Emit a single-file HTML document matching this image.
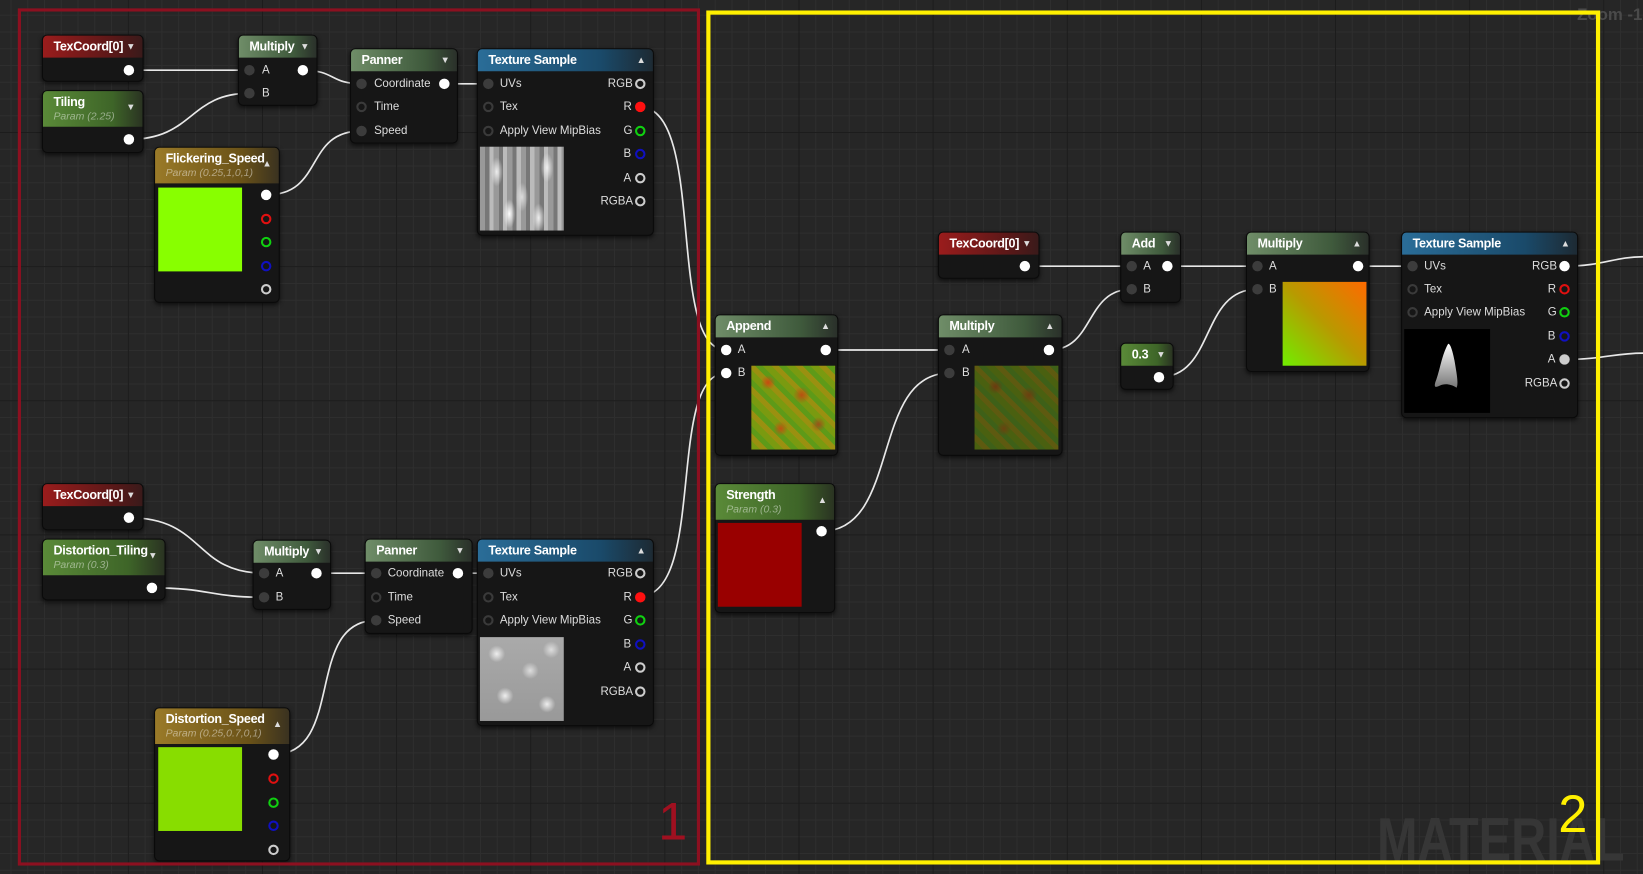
<!DOCTYPE html>
<html><head><meta charset="utf-8"><style>
*{margin:0;padding:0;box-sizing:border-box}
body{width:1643px;height:874px;overflow:hidden;position:relative;font-family:"Liberation Sans",sans-serif;background:#262626}
#w{position:absolute;left:0;top:0;width:1568px;height:834px;transform:scale(1.0479);transform-origin:0 0;overflow:hidden;
background-color:#262626;
background-image:linear-gradient(#1b1b1b 1px,transparent 1px),linear-gradient(90deg,#1b1b1b 1px,transparent 1px),linear-gradient(#2e2e2e 1px,transparent 1px),linear-gradient(90deg,#2e2e2e 1px,transparent 1px);
background-size:128px 128px,128px 128px,16px 16px,16px 16px;background-position:-6px -2px}
.n{position:absolute;background:#161616;border-radius:5px;border:1px solid #0a0a0a;box-shadow:0 2px 4px rgba(0,0,0,.6)}
.h{height:21px;border-radius:4px 4px 0 0;color:#fff;font-weight:bold;font-size:12px;padding:3px 0 0 10px;position:relative;letter-spacing:-.3px}
.h2{height:34px}
.h .s{display:block;font-weight:normal;font-style:italic;font-size:10px;color:rgba(255,255,255,.45);margin-top:2px;letter-spacing:0}
.h .a{position:absolute;right:7px;top:5px;font-size:9px;color:#ddd}
.red{background:linear-gradient(90deg,#9a1c1c,#5a1818 70%,#3a1a1a)}
.grn{background:linear-gradient(90deg,#6f8d68,#3f5a3c 70%,#2a302a)}
.par{background:linear-gradient(90deg,#5a8a38,#3e6528 70%,#2a3322)}
.gold{background:linear-gradient(90deg,#9a7a28,#6a5218 70%,#3a3220)}
.blu{background:linear-gradient(90deg,#2a6d98,#1a4a6a 70%,#1d2a33)}
.t{position:absolute;color:#ddd;font-size:11px;white-space:nowrap;transform:translateY(-50%)}
i{position:absolute;width:10px;height:10px;border-radius:50%;transform:translate(-50%,-50%)}
.pi{background:#3c3c3c}
.pe{border:2px solid #3a3a3a}
.po{background:#fff}
.pR{border:2px solid #e01010}.pG{border:2px solid #10d010}.pB{border:2px solid #1010c0}.pW{border:2px solid #ccc}
.pRf{background:#ff1010}.pGr{background:#ccc}
.sw{position:absolute}
.noise{background:
radial-gradient(ellipse 6px 14px at 20% 30%,#eee,transparent),radial-gradient(ellipse 6px 14px at 50% 60%,#ddd,transparent),radial-gradient(ellipse 6px 14px at 80% 25%,#eee,transparent),radial-gradient(ellipse 6px 14px at 35% 80%,#fff,transparent),radial-gradient(ellipse 6px 14px at 70% 85%,#eee,transparent),
repeating-linear-gradient(90deg,#999 0 5px,#777 5px 9px,#bbb 9px 13px);}
.noise2{background:radial-gradient(circle 8px at 20% 20%,#eee,transparent),radial-gradient(circle 8px at 60% 40%,#ddd,transparent),radial-gradient(circle 8px at 30% 70%,#eee,transparent),radial-gradient(circle 8px at 80% 80%,#eee,transparent),radial-gradient(circle 8px at 85% 15%,#ddd,transparent),
linear-gradient(#aaa,#999)}
.mix{background:radial-gradient(circle 7px at 20% 20%,#c84a10,transparent),radial-gradient(circle 8px at 60% 35%,#b85010,transparent),radial-gradient(circle 7px at 35% 75%,#c05010,transparent),radial-gradient(circle 7px at 80% 70%,#a05018,transparent),
repeating-linear-gradient(45deg,#7a9a10 0 6px,#9a9010 6px 11px,#5e9a18 11px 16px)}
.mix2{background:radial-gradient(circle 7px at 25% 25%,#6a3a10,transparent),radial-gradient(circle 8px at 65% 35%,#6a4010,transparent),radial-gradient(circle 7px at 35% 75%,#6a4210,transparent),
repeating-linear-gradient(45deg,#4a6010 0 6px,#5e5a10 6px 11px,#3e6018 11px 16px)}
</style></head><body><div id="w">

<svg width="1568" height="834" style="position:absolute;left:0;top:0" fill="none" stroke="#e8e8e8" stroke-width="1.6">
<path d="M123 67H238"/>
<path d="M123 133C185 133 180 89 238 89"/>
<path d="M289 67C320 67 315 80 345 80"/>
<path d="M254 186C310 186 290 125 345 125"/>
<path d="M424 80H466"/>
<path d="M610 102C675 102 635 334 693 334"/>
<path d="M123 494C195 494 185 547 252 547"/>
<path d="M145 561C200 561 200 570 252 570"/>
<path d="M302 547H359"/>
<path d="M261 720C330 720 290 592 359 592"/>
<path d="M437 547H466"/>
<path d="M610 569C675 569 635 356 693 356"/>
<path d="M788 334H906"/>
<path d="M784 507C860 507 830 356 906 356"/>
<path d="M1001 334C1045 334 1035 276 1080 276"/>
<path d="M978 254H1080"/>
<path d="M1114 254H1200"/>
<path d="M1106 360C1160 360 1145 276 1200 276"/>
<path d="M1296 254H1348"/>
<path d="M1493 254C1530 254 1540 245 1568 245"/>
<path d="M1493 343C1530 343 1540 337 1568 337"/>
</svg>

<div class="n" style="left:40px;top:33px;width:97px;height:45px"><div class="h red">TexCoord[0]<span class="a">▼</span></div></div>
<i class="po" style="left:123px;top:67px"></i>
<div class="n" style="left:40px;top:86px;width:97px;height:60px"><div class="h h2 par">Tiling<span class="s">Param (2.25)</span><span class="a" style="top:10px">▼</span></div></div>
<i class="po" style="left:123px;top:133px"></i>
<div class="n" style="left:227px;top:33px;width:76px;height:68px"><div class="h grn">Multiply<span class="a">▼</span></div></div>
<i class="pi" style="left:238px;top:67px"></i><span class="t" style="left:250px;top:67px">A</span>
<i class="pi" style="left:238px;top:89px"></i><span class="t" style="left:250px;top:89px">B</span>
<i class="po" style="left:289px;top:67px"></i>
<div class="n" style="left:334px;top:46px;width:103px;height:91px"><div class="h grn">Panner<span class="a">▼</span></div></div>
<i class="pi" style="left:345px;top:80px"></i><span class="t" style="left:357px;top:80px">Coordinate</span>
<i class="pe" style="left:345px;top:102px"></i><span class="t" style="left:357px;top:102px">Time</span>
<i class="pi" style="left:345px;top:125px"></i><span class="t" style="left:357px;top:125px">Speed</span>
<i class="po" style="left:424px;top:80px"></i>
<div class="n" style="left:455px;top:46px;width:169px;height:179px"><div class="h blu">Texture Sample<span class="a">▲</span></div><div class="sw noise" style="left:2px;top:93px;width:80px;height:80px"></div></div>
<i class="pi" style="left:466px;top:80px"></i><span class="t" style="left:477px;top:80px">UVs</span>
<i class="pe" style="left:466px;top:102px"></i><span class="t" style="left:477px;top:102px">Tex</span>
<i class="pe" style="left:466px;top:125px"></i><span class="t" style="left:477px;top:125px">Apply View MipBias</span>
<span class="t" style="left:580px;top:80px">RGB</span><i class="pW" style="left:611px;top:80px"></i>
<span class="t" style="left:595px;top:102px">R</span><i class="pRf" style="left:611px;top:102px"></i>
<span class="t" style="left:595px;top:125px">G</span><i class="pG" style="left:611px;top:125px"></i>
<span class="t" style="left:595px;top:147px">B</span><i class="pB" style="left:611px;top:147px"></i>
<span class="t" style="left:595px;top:170px">A</span><i class="pW" style="left:611px;top:170px"></i>
<span class="t" style="left:573px;top:192px">RGBA</span><i class="pW" style="left:611px;top:192px"></i>
<div class="n" style="left:147px;top:140px;width:120px;height:149px"><div class="h h2 gold">Flickering_Speed<span class="s">Param (0.25,1,0,1)</span><span class="a" style="top:10px">▲</span></div><div class="sw" style="left:3px;top:38px;width:80px;height:80px;background:#88ff00"></div></div>
<i class="po" style="left:254px;top:186px"></i><i class="pR" style="left:254px;top:209px"></i><i class="pG" style="left:254px;top:231px"></i><i class="pB" style="left:254px;top:254px"></i><i class="pW" style="left:254px;top:276px"></i>

<div class="n" style="left:40px;top:461px;width:97px;height:45px"><div class="h red">TexCoord[0]<span class="a">▼</span></div></div>
<i class="po" style="left:123px;top:494px"></i>
<div class="n" style="left:40px;top:514px;width:118px;height:59px"><div class="h h2 par">Distortion_Tiling<span class="s">Param (0.3)</span><span class="a" style="top:10px">▼</span></div></div>
<i class="po" style="left:145px;top:561px"></i>
<div class="n" style="left:241px;top:515px;width:75px;height:67px"><div class="h grn">Multiply<span class="a">▼</span></div></div>
<i class="pi" style="left:252px;top:547px"></i><span class="t" style="left:263px;top:547px">A</span>
<i class="pi" style="left:252px;top:570px"></i><span class="t" style="left:263px;top:570px">B</span>
<i class="po" style="left:302px;top:547px"></i>
<div class="n" style="left:348px;top:514px;width:103px;height:91px"><div class="h grn">Panner<span class="a">▼</span></div></div>
<i class="pi" style="left:359px;top:547px"></i><span class="t" style="left:370px;top:547px">Coordinate</span>
<i class="pe" style="left:359px;top:570px"></i><span class="t" style="left:370px;top:570px">Time</span>
<i class="pi" style="left:359px;top:592px"></i><span class="t" style="left:370px;top:592px">Speed</span>
<i class="po" style="left:437px;top:547px"></i>
<div class="n" style="left:455px;top:514px;width:169px;height:179px"><div class="h blu">Texture Sample<span class="a">▲</span></div><div class="sw noise2" style="left:2px;top:93px;width:80px;height:80px"></div></div>
<i class="pi" style="left:466px;top:547px"></i><span class="t" style="left:477px;top:547px">UVs</span>
<i class="pe" style="left:466px;top:570px"></i><span class="t" style="left:477px;top:570px">Tex</span>
<i class="pe" style="left:466px;top:592px"></i><span class="t" style="left:477px;top:592px">Apply View MipBias</span>
<span class="t" style="left:580px;top:547px">RGB</span><i class="pW" style="left:611px;top:547px"></i>
<span class="t" style="left:595px;top:570px">R</span><i class="pRf" style="left:611px;top:570px"></i>
<span class="t" style="left:595px;top:592px">G</span><i class="pG" style="left:611px;top:592px"></i>
<span class="t" style="left:595px;top:615px">B</span><i class="pB" style="left:611px;top:615px"></i>
<span class="t" style="left:595px;top:637px">A</span><i class="pW" style="left:611px;top:637px"></i>
<span class="t" style="left:573px;top:660px">RGBA</span><i class="pW" style="left:611px;top:660px"></i>
<div class="n" style="left:147px;top:675px;width:130px;height:147px"><div class="h h2 gold">Distortion_Speed<span class="s">Param (0.25,0.7,0,1)</span><span class="a" style="top:10px">▲</span></div><div class="sw" style="left:3px;top:37px;width:80px;height:80px;background:#88dd00"></div></div>
<i class="po" style="left:261px;top:720px"></i><i class="pR" style="left:261px;top:743px"></i><i class="pG" style="left:261px;top:766px"></i><i class="pB" style="left:261px;top:788px"></i><i class="pW" style="left:261px;top:811px"></i>

<div class="n" style="left:682px;top:300px;width:118px;height:135px"><div class="h grn">Append<span class="a">▲</span></div><div class="sw mix" style="left:34px;top:48px;width:80px;height:80px"></div></div>
<i class="po" style="left:693px;top:334px"></i><span class="t" style="left:704px;top:334px">A</span>
<i class="po" style="left:693px;top:356px"></i><span class="t" style="left:704px;top:356px">B</span>
<i class="po" style="left:788px;top:334px"></i>
<div class="n" style="left:895px;top:300px;width:119px;height:135px"><div class="h grn">Multiply<span class="a">▲</span></div><div class="sw mix2" style="left:34px;top:48px;width:80px;height:80px"></div></div>
<i class="pi" style="left:906px;top:334px"></i><span class="t" style="left:918px;top:334px">A</span>
<i class="pi" style="left:906px;top:356px"></i><span class="t" style="left:918px;top:356px">B</span>
<i class="po" style="left:1001px;top:334px"></i>
<div class="n" style="left:682px;top:461px;width:115px;height:124px"><div class="h h2 par">Strength<span class="s">Param (0.3)</span><span class="a" style="top:10px">▲</span></div><div class="sw" style="left:2px;top:37px;width:80px;height:80px;background:#990000"></div></div>
<i class="po" style="left:784px;top:507px"></i>
<div class="n" style="left:895px;top:221px;width:97px;height:45px"><div class="h red">TexCoord[0]<span class="a">▼</span></div></div>
<i class="po" style="left:978px;top:254px"></i>
<div class="n" style="left:1069px;top:221px;width:58px;height:68px"><div class="h grn">Add<span class="a">▼</span></div></div>
<i class="pi" style="left:1080px;top:254px"></i><span class="t" style="left:1091px;top:254px">A</span>
<i class="pi" style="left:1080px;top:276px"></i><span class="t" style="left:1091px;top:276px">B</span>
<i class="po" style="left:1114px;top:254px"></i>
<div class="n" style="left:1069px;top:327px;width:51px;height:45px"><div class="h par">0.3<span class="a">▼</span></div></div>
<i class="po" style="left:1106px;top:360px"></i>
<div class="n" style="left:1189px;top:221px;width:118px;height:134px"><div class="h grn">Multiply<span class="a">▲</span></div><div class="sw" style="left:34px;top:47px;width:80px;height:80px;background:linear-gradient(225deg,#ff6a00,#b89a00 50%,#70ee00)"></div></div>
<i class="pi" style="left:1200px;top:254px"></i><span class="t" style="left:1211px;top:254px">A</span>
<i class="pi" style="left:1200px;top:276px"></i><span class="t" style="left:1211px;top:276px">B</span>
<i class="po" style="left:1296px;top:254px"></i>
<div class="n" style="left:1337px;top:221px;width:169px;height:178px"><div class="h blu">Texture Sample<span class="a">▲</span></div><div class="sw" style="left:2px;top:92px;width:82px;height:80px;background:#000"><svg width="82" height="80"><defs><linearGradient id="g" x1="0" y1="0" x2="0" y2="1"><stop offset="0" stop-color="#fff"/><stop offset="1" stop-color="#777"/></linearGradient></defs><path d="M42 14C36 24 34 40 30 50 28 56 30 56 34 54 38 52 44 52 50 56 52 52 50 42 48 30 46 20 44 14 42 14Z" fill="url(#g)"/></svg></div></div>
<i class="pi" style="left:1348px;top:254px"></i><span class="t" style="left:1359px;top:254px">UVs</span>
<i class="pe" style="left:1348px;top:276px"></i><span class="t" style="left:1359px;top:276px">Tex</span>
<i class="pe" style="left:1348px;top:298px"></i><span class="t" style="left:1359px;top:298px">Apply View MipBias</span>
<span class="t" style="left:1462px;top:254px">RGB</span><i class="po" style="left:1493px;top:254px"></i>
<span class="t" style="left:1477px;top:276px">R</span><i class="pR" style="left:1493px;top:276px"></i>
<span class="t" style="left:1477px;top:298px">G</span><i class="pG" style="left:1493px;top:298px"></i>
<span class="t" style="left:1477px;top:321px">B</span><i class="pB" style="left:1493px;top:321px"></i>
<span class="t" style="left:1477px;top:343px">A</span><i class="pGr" style="left:1493px;top:343px"></i>
<span class="t" style="left:1455px;top:366px">RGBA</span><i class="pW" style="left:1493px;top:366px"></i>

<div style="position:absolute;left:1314px;top:768px;font-size:58px;font-weight:bold;color:#363636;transform:scaleX(.8);transform-origin:0 0;white-space:nowrap">MATERIAL</div>
<div style="position:absolute;left:1505px;top:6px;font-size:16px;font-weight:bold;color:#4a4a4a">Zoom -1</div>
<div style="position:absolute;left:17px;top:8px;width:651px;height:818px;border:3px solid #8c1020"></div>
<div style="position:absolute;left:674px;top:10px;width:853px;height:815px;border:4px solid #fff000"></div>
<div style="position:absolute;left:628px;top:755px;font-size:50px;color:#a01020">1</div>
<div style="position:absolute;left:1487px;top:748px;font-size:50px;color:#fff000">2</div>
</div></body></html>
